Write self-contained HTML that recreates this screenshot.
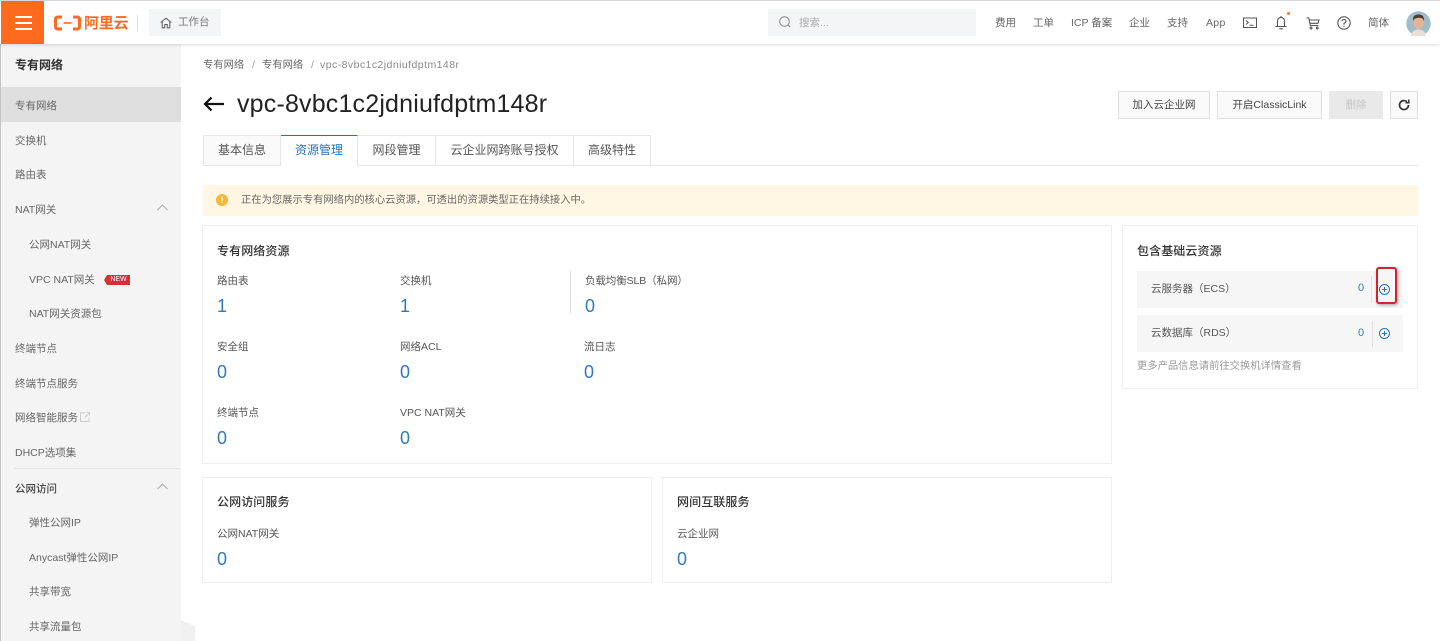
<!DOCTYPE html>
<html lang="zh-CN"><head><meta charset="utf-8"><title>vpc</title>
<style>
html,body{margin:0;padding:0;width:1440px;height:641px;overflow:hidden;background:#fff;font-family:"Liberation Sans","Noto Sans CJK SC",sans-serif;color:#444}
#p{position:absolute;left:0;top:0;width:1440px;height:641px;overflow:hidden;filter:blur(.3px)}
.t{position:absolute;white-space:nowrap;line-height:16px}
.b{position:absolute;box-sizing:border-box}
.s{font-size:10.5px;color:#555}
.n{font-size:18px;color:#3079bc;line-height:22px}
.h{font-size:12px;font-weight:500;color:#333;letter-spacing:.1px}
.m{font-size:10.5px;color:#666;left:15px}
.m2{font-size:10.5px;color:#666;left:29px}
.nav{font-size:10.5px;color:#666}
.card{border:1px solid #eee;background:#fff}
.tab{position:absolute;top:135px;height:31px;box-sizing:border-box;border:1px solid #e6e6e6;border-left:0;background:#fff;font-size:12px;color:#555;text-align:center;line-height:29px}
.btn{position:absolute;top:91px;height:28px;box-sizing:border-box;border:1px solid #e0e0e0;background:#fafafa;font-size:10.5px;color:#444;text-align:center;line-height:26px}
svg{position:absolute;overflow:visible}
</style></head><body><div id="p">
<!-- top bar -->
<div class="b" style="left:0;top:0;width:1440px;height:1px;background:#ddd"></div>
<div class="b" style="left:0;top:1px;width:1440px;height:43px;background:#fff;box-shadow:0 1px 3px rgba(0,0,0,.15);z-index:3"></div>
<div style="position:absolute;left:0;top:0;width:1440px;height:45px;z-index:4">
<div class="b" style="left:1px;top:1px;width:43px;height:43px;background:#ff6a1f"></div>
<div class="b" style="left:15px;top:16px;width:17px;height:2px;background:#fff"></div>
<div class="b" style="left:15px;top:22px;width:17px;height:2px;background:#fff"></div>
<div class="b" style="left:15px;top:28px;width:17px;height:2px;background:#fff"></div>
<svg style="left:54px;top:15px" width="27" height="16" viewBox="0 0 27 16" fill="none" stroke="#ff6a1f"><path d="M8 2H4Q1.500 2 1.500 4.500V11.500Q1.500 14 4 14H8M19 2H23Q25.500 2 25.500 4.500V11.500Q25.500 14 23 14H19" stroke-width="3"/><path d="M9.500 8H17.500" stroke-width="1.600"/></svg>
<div class="t" style="left:84px;top:15px;font-size:15px;font-weight:700;color:#ff6a1f;line-height:17px;letter-spacing:-.2px">阿里云</div>
<div class="b" style="left:137px;top:15px;width:1px;height:16px;background:#ddd"></div>
<div class="b" style="left:149px;top:9px;width:72px;height:27px;background:#f4f5f7"></div>
<svg style="left:160px;top:17px" width="12" height="12" viewBox="0 0 12 12" fill="none" stroke="#666" stroke-width="1.100"><path d="M.7 5.600 6 1.200 11.300 5.600M2.200 4.800V10.800H4.700V7.500H7.300V10.800H9.800V4.800"/></svg>
<div class="t nav" style="left:178px;top:14px;color:#777">工作台</div>
<div class="b" style="left:768px;top:9px;width:208px;height:27px;background:#f4f5f7"></div>
<svg style="left:779px;top:16px" width="12" height="12" viewBox="0 0 12 12" fill="none" stroke="#888" stroke-width="1"><circle cx="5.500" cy="5.500" r="4.800"/><path d="M9 9 11 11"/></svg>
<div class="t nav" style="left:799px;top:15px;color:#aaa">搜索...</div>
<div class="t nav" style="left:995px;top:15px">费用</div>
<div class="t nav" style="left:1033px;top:15px">工单</div>
<div class="t nav" style="left:1071px;top:15px">ICP 备案</div>
<div class="t nav" style="left:1129px;top:15px">企业</div>
<div class="t nav" style="left:1167px;top:15px">支持</div>
<div class="t nav" style="left:1206px;top:15px;letter-spacing:.3px">App</div>
<svg style="left:1243px;top:17px" width="14" height="12" viewBox="0 0 14 12" fill="none" stroke="#555" stroke-width="1"><rect x=".5" y="1" width="13" height="9.500"/><path d="M3 3.500 5.300 5.500 3 7.500M6.500 8.300H10.500"/></svg>
<svg style="left:1275px;top:15px" width="12" height="15" viewBox="0 0 12 15" fill="none" stroke="#555" stroke-width="1.100"><path d="M6 1V2.500M2.500 11V6.500Q2.500 2.500 6 2.500T9.500 6.500V11M.5 11.500H11.500M4.200 13.800H7.800"/></svg>
<div class="b" style="left:1287px;top:12px;width:3px;height:3px;border-radius:50%;background:#ee7a30"></div>
<svg style="left:1306px;top:17px" width="14" height="13" viewBox="0 0 14 13" fill="none" stroke="#555" stroke-width="1.100"><path d="M.5 1H2.800L4.300 8.500H12.300M3.200 3H13L12 6.300H3.900"/><circle cx="5" cy="11" r=".9"/><circle cx="11.300" cy="11" r=".9"/></svg>
<svg style="left:1337px;top:16px" width="14" height="14" viewBox="0 0 14 14" fill="none" stroke="#555" stroke-width="1.100"><circle cx="7" cy="7" r="6.200"/><path d="M5 5.400Q5 3.500 7 3.500T9 5.400Q9 6.400 7 7.500V8.800M7 9.800V11"/></svg>
<div class="t nav" style="left:1368px;top:15px">简体</div>
<svg style="left:1406px;top:11px" width="25" height="25" viewBox="0 0 25 25"><circle cx="12.500" cy="12.500" r="12.200" fill="#9fbccb"/><ellipse cx="12.500" cy="11.500" rx="5.200" ry="6.500" fill="#e5b496"/><path d="M7 10Q6.500 3.500 12.500 3.500T18 10Q17 6.500 12.500 6.800T7 10Z" fill="#4a3a30"/><path d="M5 25Q6 18.500 12.500 18.500T20 25Z" fill="#e8dfd8"/></svg>
</div>
<!-- sidebar -->
<div class="b" style="left:0;top:44px;width:181px;height:597px;background:#f4f4f5"></div>
<div class="b" style="left:0;top:44px;width:1px;height:597px;background:#c4c4c4"></div>
<div class="b" style="left:181px;top:620px;width:14px;height:21px;background:#f0f0f0;clip-path:polygon(0 0,100% 30%,100% 100%,0 100%)"></div>
<div class="b" style="left:1px;top:87px;width:180px;height:35px;background:#dedede"></div>
<div class="t" style="left:15px;top:57px;font-size:12px;font-weight:700;color:#333">专有网络</div>
<div class="t m" style="top:98px">专有网络</div>
<div class="t m" style="top:133px">交换机</div>
<div class="t m" style="top:167px">路由表</div>
<div class="t m" style="top:202px">NAT网关</div>
<div class="t m2" style="top:237px">公网NAT网关</div>
<div class="t m2" style="top:272px">VPC NAT网关</div>
<div class="b" style="left:104px;top:275px;width:26px;height:10px;background:#d9302f;color:#fff;font-size:7px;line-height:10px;text-align:center;padding-left:3px;clip-path:polygon(3px 0,100% 0,100% 100%,3px 100%,0 50%)">NEW</div>
<div class="t m2" style="top:306px">NAT网关资源包</div>
<div class="t m" style="top:341px">终端节点</div>
<div class="t m" style="top:376px">终端节点服务</div>
<div class="t m" style="top:410px">网络智能服务</div>
<svg style="left:80px;top:412px" width="10" height="10" viewBox="0 0 10 10" fill="none" stroke="#ccc" stroke-width="1"><path d="M5 1H.5V9.500H9V5.500M5 5.500 9.500.5M6.500.5H9.500V3.500"/></svg>
<div class="t m" style="top:445px">DHCP选项集</div>
<div class="b" style="left:14px;top:468px;width:167px;height:1px;background:#e6e6ea"></div>
<div class="t m" style="top:481px;color:#444;font-weight:500">公网访问</div>
<div class="t m2" style="top:515px">弹性公网IP</div>
<div class="t m2" style="top:550px">Anycast弹性公网IP</div>
<div class="t m2" style="top:584px">共享带宽</div>
<div class="t m2" style="top:619px">共享流量包</div>
<svg style="left:157px;top:204px" width="11" height="7" viewBox="0 0 11 7" fill="none" stroke="#aaa"><path d="M.5 6 5.500 1 10.500 6"/></svg>
<svg style="left:157px;top:483px" width="11" height="7" viewBox="0 0 11 7" fill="none" stroke="#aaa"><path d="M.5 6 5.500 1 10.500 6"/></svg>
<!-- header -->
<div class="t s" style="left:203px;top:58px;color:#666;font-size:10.300px">专有网络</div>
<div class="t s" style="left:252px;top:57px;color:#999">/</div>
<div class="t s" style="left:262px;top:58px;color:#666;font-size:10.300px">专有网络</div>
<div class="t s" style="left:311px;top:57px;color:#999">/</div>
<div class="t s" style="left:320px;top:57px;color:#888;font-size:10.500px;letter-spacing:.44px">vpc-8vbc1c2jdniufdptm148r</div>
<svg style="left:203px;top:96px" width="21" height="16" viewBox="0 0 21 16" fill="none" stroke="#111" stroke-width="2.200"><path d="M21 8H2M8.500 1.500 2 8 8.500 14.500"/></svg>
<div class="t" style="left:237px;top:90px;font-size:25px;line-height:28px;color:#222;letter-spacing:.18px">vpc-8vbc1c2jdniufdptm148r</div>
<div class="btn" style="left:1118px;width:92px">加入云企业网</div>
<div class="btn" style="left:1217px;width:105px">开启ClassicLink</div>
<div class="btn" style="left:1329px;width:54px;background:#e9e9e9;border-color:#e9e9e9;color:#c4c4c4">删除</div>
<div class="btn" style="left:1390px;width:28px"></div>
<svg style="left:1398px;top:99px" width="12" height="12" viewBox="0 0 12 12" fill="none" stroke="#333" stroke-width="1.700"><path d="M10.500 6A4.500 4.500 0 1 1 9 2.700"/><path d="M10.800.5V3.700H7.600" stroke-width="1.500"/></svg>
<!-- tabs -->
<div class="b" style="left:203px;top:165px;width:1215px;height:1px;background:#e6e6e6"></div>
<div class="tab" style="left:203px;width:78px;border-left:1px solid #e6e6e6;background:#fafafa">基本信息</div>
<div class="tab" style="left:281px;width:77px;border-top:1px solid #2a72b5;border-bottom-color:#fff;color:#2a72b5">资源管理</div>
<div class="tab" style="left:358px;width:78px">网段管理</div>
<div class="tab" style="left:436px;width:138px">云企业网跨账号授权</div>
<div class="tab" style="left:574px;width:77px">高级特性</div>
<!-- notice -->
<div class="b" style="left:203px;top:185px;width:1215px;height:31px;background:#fff7e3"></div>
<div class="b" style="left:216px;top:194px;width:12px;height:12px;border-radius:50%;background:#f6b73c;color:#fff;font-size:9px;font-weight:700;line-height:12px;text-align:center">!</div>
<div class="t" style="left:241px;top:193px;font-size:10.300px;color:#666">正在为您展示专有网络内的核心云资源，可透出的资源类型正在持续接入中。</div>
<!-- main card -->
<div class="b card" style="left:202px;top:225px;width:910px;height:239px"></div>
<div class="t h" style="left:217px;top:243px">专有网络资源</div>
<div class="t s" style="left:217px;top:273px">路由表</div><div class="t n" style="left:217px;top:295px">1</div>
<div class="t s" style="left:400px;top:273px">交换机</div><div class="t n" style="left:400px;top:295px">1</div>
<div class="b" style="left:570px;top:271px;width:1px;height:42px;background:#ddd"></div>
<div class="t s" style="left:585px;top:273px;letter-spacing:-.1px">负载均衡SLB（私网）</div><div class="t n" style="left:585px;top:295px">0</div>
<div class="t s" style="left:217px;top:339px">安全组</div><div class="t n" style="left:217px;top:361px">0</div>
<div class="t s" style="left:400px;top:339px">网络ACL</div><div class="t n" style="left:400px;top:361px">0</div>
<div class="t s" style="left:584px;top:339px">流日志</div><div class="t n" style="left:584px;top:361px">0</div>
<div class="t s" style="left:217px;top:405px">终端节点</div><div class="t n" style="left:217px;top:427px">0</div>
<div class="t s" style="left:400px;top:405px">VPC NAT网关</div><div class="t n" style="left:400px;top:427px">0</div>
<!-- cards -->
<div class="b card" style="left:202px;top:477px;width:450px;height:106px"></div>
<div class="t h" style="left:217px;top:494px">公网访问服务</div>
<div class="t s" style="left:217px;top:526px">公网NAT网关</div><div class="t n" style="left:217px;top:548px">0</div>
<div class="b card" style="left:662px;top:477px;width:450px;height:106px"></div>
<div class="t h" style="left:677px;top:494px">网间互联服务</div>
<div class="t s" style="left:677px;top:526px">云企业网</div><div class="t n" style="left:677px;top:548px">0</div>
<!-- right card -->
<div class="b card" style="left:1122px;top:225px;width:296px;height:164px"></div>
<div class="t h" style="left:1137px;top:243px">包含基础云资源</div>
<div class="b" style="left:1137px;top:271px;width:266px;height:37px;background:#f6f6f6"></div>
<div class="b" style="left:1137px;top:315px;width:266px;height:37px;background:#f6f6f6"></div>
<div class="t s" style="left:1151px;top:281px">云服务器（ECS）</div>
<div class="t s" style="left:1151px;top:325px">云数据库（RDS）</div>
<div class="t" style="left:1358px;top:280px;font-size:11px;color:#3079bc">0</div>
<div class="t" style="left:1358px;top:325px;font-size:11px;color:#3079bc">0</div>
<div class="b" style="left:1371px;top:276px;width:1px;height:27px;background:#e0e0e0"></div>
<div class="b" style="left:1372px;top:321px;width:1px;height:26px;background:#e0e0e0"></div>
<svg style="left:1379px;top:284px" width="11" height="11" viewBox="0 0 11 11" fill="none" stroke="#2a72b5"><circle cx="5.500" cy="5.500" r="5"/><path d="M3 5.500H8M5.500 3V8"/></svg>
<svg style="left:1379px;top:328px" width="11" height="11" viewBox="0 0 11 11" fill="none" stroke="#2a72b5"><circle cx="5.500" cy="5.500" r="5"/><path d="M3 5.500H8M5.500 3V8"/></svg>
<div class="b" style="left:1376px;top:267px;width:21px;height:37px;border:2px solid #d8202a;border-radius:3px;box-shadow:1px 1px 3px rgba(0,0,0,.35)"></div>
<div class="t" style="left:1137px;top:359px;font-size:10.300px;color:#999">更多产品信息请前往交换机详情查看</div>
</div></body></html>
